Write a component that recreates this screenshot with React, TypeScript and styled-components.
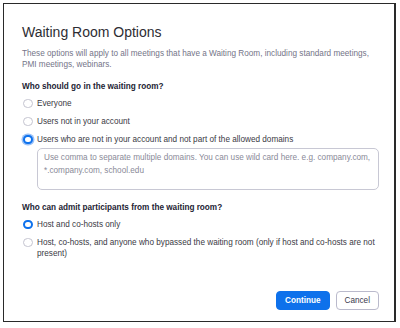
import styled, { createGlobalStyle } from 'styled-components';

const GlobalStyle = createGlobalStyle`
  html, body {
    margin: 0;
    padding: 0;
    background: #ffffff;
  }
  body {
    font-family: "Liberation Sans", Arial, Helvetica, sans-serif;
    -webkit-font-smoothing: antialiased;
  }
`;

type Option = { label: string; checked?: boolean; focused?: boolean };

const whoGoes: Option[] = [
  { label: 'Everyone' },
  { label: 'Users not in your account' },
  { label: 'Users who are not in your account and not part of the allowed domains', checked: true, focused: true },
];

const whoAdmits: Option[] = [
  { label: 'Host and co-hosts only', checked: true },
  {
    label:
      'Host, co-hosts, and anyone who bypassed the waiting room (only if host and co-hosts are not present)',
  },
];

function App() {
  return (
    <>
      <GlobalStyle />
      <Frame>
        <Title>Waiting Room Options</Title>
        <Description>
          These options will apply to all meetings that have a Waiting Room, including standard meetings,
          PMI meetings, webinars.
        </Description>

        <Question $gap={11}>Who should go in the waiting room?</Question>
        <OptionList>
          {whoGoes.map(o => (
            <OptionRow key={o.label}>
              <Radio $checked={o.checked} $focused={o.focused} />
              <OptionLabel>{o.label}</OptionLabel>
            </OptionRow>
          ))}
        </OptionList>
        <Domains
          placeholder="Use comma to separate multiple domains. You can use wild card here. e.g. company.com, *.company.com, school.edu"
          readOnly
        />

        <Question $gap={12}>Who can admit participants from the waiting room?</Question>
        <OptionList>
          {whoAdmits.map(o => (
            <OptionRow key={o.label}>
              <Radio $checked={o.checked} $focused={o.focused} />
              <OptionLabel>{o.label}</OptionLabel>
            </OptionRow>
          ))}
        </OptionList>

        <Footer>
          <PrimaryButton>Continue</PrimaryButton>
          <SecondaryButton>Cancel</SecondaryButton>
        </Footer>
      </Frame>
    </>
  );
}

const Frame = styled.div`
  box-sizing: border-box;
  margin: 3px 4px 0 3px;
  height: 319px;
  border: 1px solid #2a2a2a;
  border-right-width: 2px;
  padding: 20px 15px 11px 18px;
  display: flex;
  flex-direction: column;
`;

const Title = styled.h1`
  margin: 0;
  font-size: 14px;
  line-height: 16px;
  font-weight: 400;
  color: #2d2d33;
`;

const Description = styled.p`
  margin: 8px 0 0;
  font-size: 8.2px;
  line-height: 11px;
  color: #747487;
`;

const Question = styled.div<{ $gap: number }>`
  margin-top: ${p => p.$gap}px;
  font-size: 8.2px;
  line-height: 12px;
  font-weight: 700;
  color: #232333;
`;

const OptionList = styled.div`
  display: flex;
  flex-direction: column;
  margin-top: 1px;
`;

const OptionRow = styled.label`
  display: flex;
  align-items: flex-start;
  gap: 4.5px;
  padding: 4px 0 3px 1px;
  font-size: 8.2px;
  line-height: 11px;
  color: #3a3a44;
`;

const Radio = styled.span<{ $checked?: boolean; $focused?: boolean }>`
  box-sizing: border-box;
  flex: none;
  width: 9.5px;
  height: 9.5px;
  margin-top: 0.75px;
  border-radius: 50%;
  background: #ffffff;
  border: ${p => (p.$checked ? '2.5px solid #0e72ed' : '1px solid #c4c4d0')};
  box-shadow: ${p => (p.$focused ? '0 0 0 1.5px #9cc2f7' : 'none')};
`;

const OptionLabel = styled.span`
  flex: 1;
`;

const Domains = styled.textarea`
  box-sizing: border-box;
  display: block;
  margin: 0 0 0 15px;
  width: 342px;
  height: 42px;
  padding: 2px 6px;
  border: 1px solid #c8c8d4;
  border-radius: 5px;
  resize: none;
  outline: none;
  font-family: "Liberation Sans", Arial, sans-serif;
  font-size: 8.2px;
  line-height: 13px;
  color: #333;

  &::placeholder {
    color: #8a8a98;
  }
`;

const Footer = styled.div`
  margin-top: auto;
  display: flex;
  justify-content: flex-end;
  gap: 6px;
`;

const BaseButton = styled.button`
  box-sizing: border-box;
  height: 19px;
  padding: 0 8px;
  border-radius: 4px;
  font-family: "Liberation Sans", Arial, sans-serif;
  font-size: 8.2px;
  cursor: pointer;
`;

const PrimaryButton = styled(BaseButton)`
  background: #0e71eb;
  border: 1px solid #0e71eb;
  color: #ffffff;
  font-weight: 700;
`;

const SecondaryButton = styled(BaseButton)`
  background: #ffffff;
  border: 1px solid #babacc;
  color: #39394d;
`;

export default App;
